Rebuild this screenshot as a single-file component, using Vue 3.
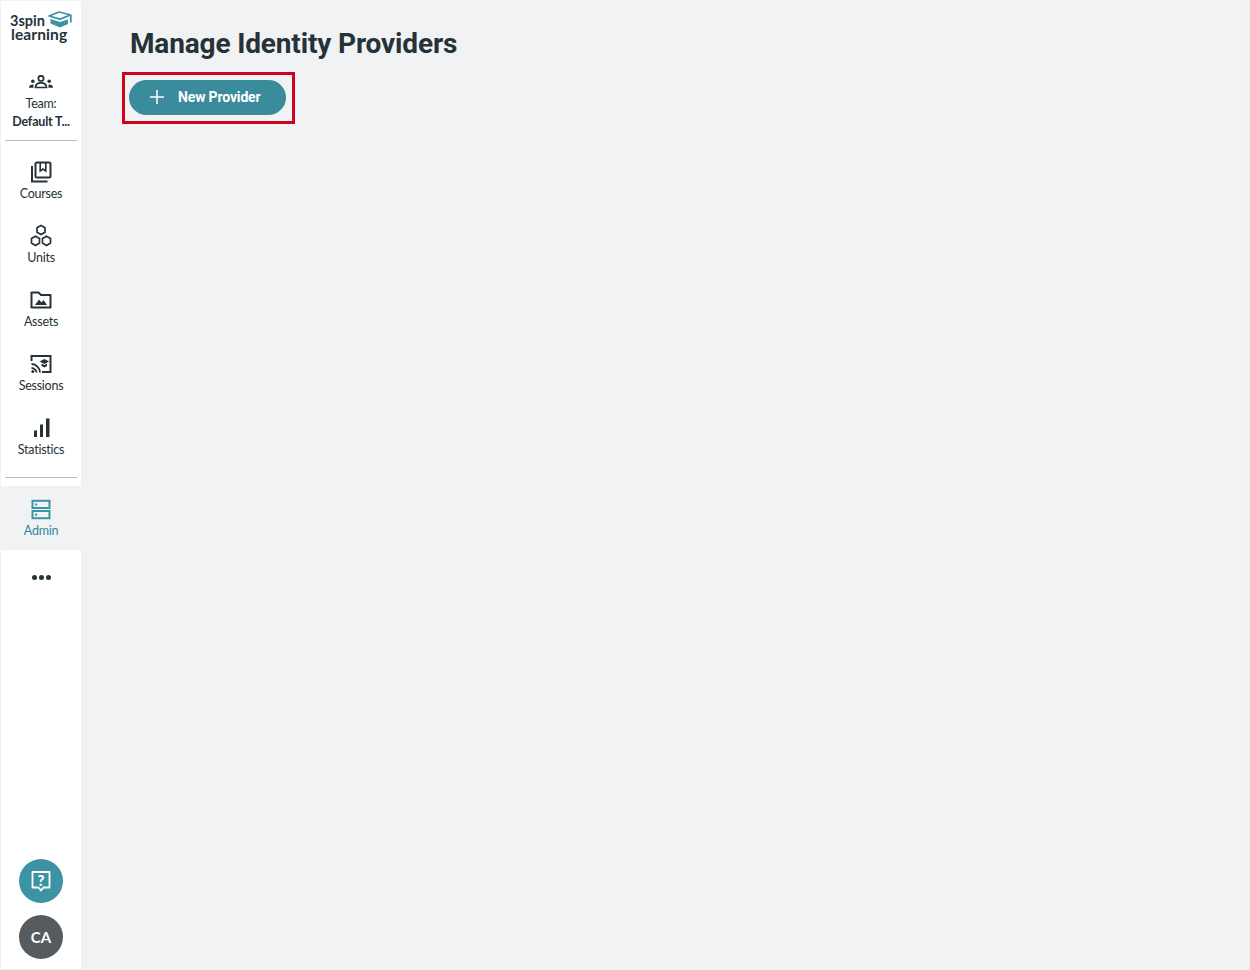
<script setup>
const items = [
  { label: 'Courses', icon: 'courses' },
  { label: 'Units', icon: 'units' },
  { label: 'Assets', icon: 'assets' },
  { label: 'Sessions', icon: 'sessions' },
  { label: 'Statistics', icon: 'stats' },
]
</script>

<template>
  <div class="app">
    <aside class="side">
      <div class="logo">
        <div class="logo-top">
          <span>3spin</span>
          <svg class="cap" width="24" height="17" viewBox="0 0 24 17">
            <path d="M1 5 L11 1 L22.500 4 L12 8.200 Z" fill="none" stroke="#3b93a3" stroke-width="1.800" stroke-linejoin="round"/>
            <path d="M2.500 8 L12 11 L20 8.500 V13 L12 16.500 L2.500 12.500 Z" fill="#3b93a3"/>
            <path d="M22.800 4 V11.500" stroke="#3b93a3" stroke-width="1.800"/>
          </svg>
        </div>
        <div class="logo-bottom">learning</div>
      </div>

      <div class="team">
        <svg width="26" height="14" viewBox="0 0 26 14" fill="#263238">
          <circle cx="13" cy="3.400" r="2.600" fill="none" stroke="#263238" stroke-width="1.700"/>
          <path d="M7.500 12.500 C7.500 9 10 7.800 13 7.800 S18.500 9 18.500 12.500 Z" fill="none" stroke="#263238" stroke-width="1.700"/>
          <circle cx="4.800" cy="6.200" r="1.800"/>
          <circle cx="21.200" cy="6.200" r="1.800"/>
          <path d="M1 12.800 C1 10 2.500 9.400 5.500 9.400 L5.500 12.800 Z M25 12.800 C25 10 23.500 9.400 20.500 9.400 L20.500 12.800 Z"/>
        </svg>
        <div class="team-label">Team:</div>
        <div class="team-name">Default T...</div>
      </div>
      <div class="rule"></div>

      <nav class="nav">
        <a v-for="it in items" :key="it.label" class="item">
          <svg width="24" height="24" viewBox="0 0 24 24" fill="none" stroke="#263238" stroke-width="2">
            <template v-if="it.icon === 'courses'">
              <path d="M3 6 V21.500 H18.500"/>
              <rect x="6.500" y="2.500" width="15" height="15" rx="1.500"/>
              <path d="M11.200 3 V11 L14 9 L16.800 11 V3" stroke-width="1.600"/>
            </template>
            <template v-else-if="it.icon === 'units'">
              <path d="M12 1.500 L16 3.800 V8.300 L12 10.600 L8 8.300 V3.800 Z" stroke-width="1.700"/>
              <path d="M6.500 12.300 L10.500 14.600 V19.100 L6.500 21.400 L2.500 19.100 V14.600 Z" stroke-width="1.700"/>
              <path d="M17.500 12.300 L21.500 14.600 V19.100 L17.500 21.400 L13.500 19.100 V14.600 Z" stroke-width="1.700"/>
            </template>
            <template v-else-if="it.icon === 'assets'">
              <path d="M2.500 19.500 V4.500 H9.500 L12 7 H21.500 V19.500 Z" stroke-linejoin="round"/>
              <path d="M6 17 L10 11.500 L12.500 14.500 L14.500 12 L18 17 Z" fill="#263238" stroke="none"/>
            </template>
            <template v-else-if="it.icon === 'sessions'">
              <path d="M2.500 9 V4 H21.500 V20 H13"/>
              <path d="M2.500 12 C7 12 11 16 11 20.500 M2.500 16 C5 16 7.500 18 7.500 20.500" stroke-width="1.800"/>
              <circle cx="3.800" cy="19.500" r="1.500" fill="#263238" stroke="none"/>
              <path d="M10.500 9.500 L15.500 7 L20 9.500 L15.500 12 Z" fill="#263238" stroke="none"/>
              <path d="M12.500 11.500 V14 L15.500 15.500 L18 14 V11.500 L15.500 13 Z" fill="#263238" stroke="none"/>
            </template>
            <template v-else>
              <rect x="5" y="14.500" width="3" height="6.500" fill="#263238" stroke="none"/>
              <rect x="11" y="8.500" width="3" height="12.500" fill="#263238" stroke="none"/>
              <rect x="17" y="2.500" width="3.500" height="18.500" fill="#263238" stroke="none"/>
            </template>
          </svg>
          <span>{{ it.label }}</span>
        </a>
      </nav>
      <div class="rule rule-2"></div>

      <a class="item admin">
        <svg width="24" height="24" viewBox="0 0 24 24" fill="none" stroke="#3b93a3" stroke-width="2">
          <rect x="3.500" y="2.800" width="17" height="7.200"/>
          <rect x="3.500" y="13" width="17" height="7.200"/>
          <rect x="6" y="5.500" width="2.200" height="2" fill="#3b93a3" stroke="none"/>
          <rect x="6" y="15.600" width="2.200" height="2" fill="#3b93a3" stroke="none"/>
        </svg>
        <span>Admin</span>
      </a>

      <div class="dots"><i></i><i></i><i></i></div>

      <div class="bottom">
        <button class="round help">
          <svg width="24" height="24" viewBox="0 0 24 24" fill="none" stroke="#fff" stroke-width="1.800">
            <path d="M3.500 3 H20.500 V18.500 H14.500 L12 21.500 L9.500 18.500 H3.500 Z" stroke-linejoin="round"/>
          </svg>
          <b class="q">?</b>
        </button>
        <button class="round user">CA</button>
      </div>
    </aside>

    <main class="main">
      <h1>Manage Identity Providers</h1>
      <div class="highlight">
        <button class="new">
          <svg width="16" height="16" viewBox="0 0 16 16" stroke="#fff" stroke-width="1.500"><path d="M8 1 V15 M1 8 H15"/></svg>
          <span>New Provider</span>
        </button>
      </div>
    </main>
  </div>
</template>

<style>
html, body { margin: 0; background: #f0f2f4; }
</style>

<style scoped>
.app {
  display: flex;
  width: 1250px;
  height: 970px;
  overflow: hidden;
  background: #f0f2f4;
  font-family: "Lato", "Noto Sans", sans-serif;
  color: #263238;
}
.side {
  width: 80px;
  height: 968px;
  margin: 1px 0 0 1px;
  background: #fff;
  display: flex;
  flex-direction: column;
  align-items: center;
  flex: none;
}
.logo {
  width: 80px;
  height: 62px;
  padding: 10px 0 0 9px;
  box-sizing: border-box;
  font-family: "Lato", sans-serif;
  font-size: 15.500px;
  line-height: 14px;
  color: #263238;
  font-weight: 700;
}
.logo-top {
  display: flex;
  align-items: flex-start;
}
.logo-top span { margin-top: 3px; width: 38px; flex: none; font-size: 14.500px; line-height: 13px; }
.cap { flex: none; margin-top: 0; }
.logo-bottom { margin-left: 1px; margin-top: -1px; letter-spacing: 0.1px; }
.team {
  display: flex;
  flex-direction: column;
  align-items: center;
  height: 77px;
  padding-top: 12px;
  box-sizing: border-box;
}
.team-label { font-size: 12.500px; letter-spacing: -0.25px; line-height: 18px; margin-top: 6px; }
.team-name { font-size: 12.500px; letter-spacing: -0.2px; line-height: 18px; font-weight: 700; white-space: nowrap; }
.rule {
  width: 72px;
  height: 1px;
  background: #b8bdbd;
  flex: none;
}
.nav {
  display: flex;
  flex-direction: column;
  padding-top: 19px;
}
.item {
  width: 80px;
  height: 64px;
  display: flex;
  flex-direction: column;
  align-items: center;
  font-size: 12.500px;
  letter-spacing: -0.25px;
  line-height: 18px;
  color: #263238;
  box-sizing: border-box;
}
.item span { margin-top: 1px; }
.rule-2 { margin-top: -3px; }
.admin {
  margin-top: 8px;
  height: 64px;
  padding-top: 12px;
  background: #f0f2f4;
  color: #2f8a9b;
}
.admin span { margin-top: 0; }
.dots {
  display: flex;
  gap: 2px;
  margin-top: 25px;
}
.dots i {
  width: 5px;
  height: 5px;
  border-radius: 50%;
  background: #263238;
}
.bottom {
  margin-top: auto;
  display: flex;
  flex-direction: column;
  gap: 12px;
  padding-bottom: 10px;
}
.round {
  width: 44px;
  height: 44px;
  border: 0;
  border-radius: 50%;
  padding: 0 0 1px;
  display: flex;
  align-items: center;
  justify-content: center;
  position: relative;
  color: #fff;
  font-family: "Lato", sans-serif;
  font-weight: 700;
  font-size: 15px;
}
.help { background: #3b93a3; }
.user { background: #555b5e; }
.q {
  position: absolute;
  left: 0;
  right: 0;
  top: 11px;
  font-size: 15px;
  line-height: 20px;
  text-align: center;
}
.main {
  flex: 1;
  padding: 25px 0 0 49px;
}
h1 {
  margin: 0;
  font-family: "Roboto", sans-serif;
  font-size: 28px;
  line-height: 38px;
  font-weight: 700;
  letter-spacing: -0.15px;
  color: #263238;
  white-space: nowrap;
}
.highlight {
  display: inline-block;
  margin: 9px 0 0 -8px;
  padding: 5px 6px 6px 4px;
  border: 3px solid #d0021b;
  line-height: 0;
}
.new {
  width: 157px;
  height: 35px;
  border: 0;
  border-radius: 18px;
  background: #3a8b9b;
  color: #fff;
  display: flex;
  align-items: center;
  padding: 0 0 1px 20px;
  gap: 13px;
  font-family: "Roboto", sans-serif;
  font-size: 14px;
  letter-spacing: -0.15px;
  font-weight: 700;
}
</style>
